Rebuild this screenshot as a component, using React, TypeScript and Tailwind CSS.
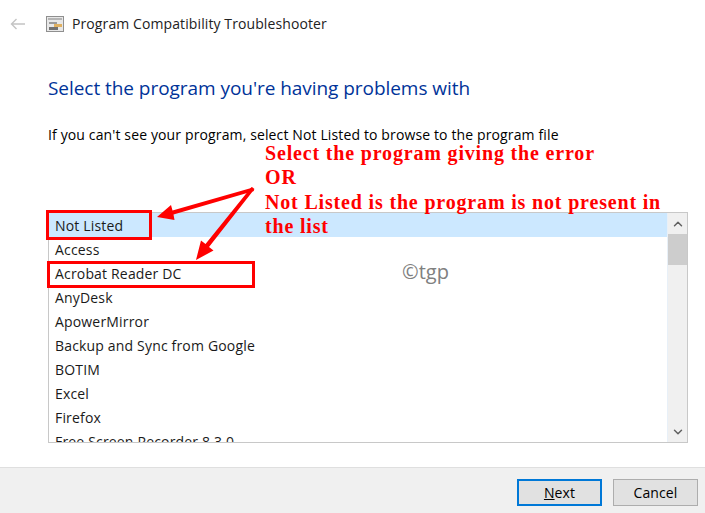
import { ChevronDown, ChevronUp } from 'lucide-react'

const programs = [
  'Not Listed',
  'Access',
  'Acrobat Reader DC',
  'AnyDesk',
  'ApowerMirror',
  'Backup and Sync from Google',
  'BOTIM',
  'Excel',
  'Firefox',
  'Free Screen Recorder 8.3.0',
]

function Annotations() {
  return (
    <>
      <div className="absolute left-[46px] top-[210px] h-[30px] w-[106px] border-[3px] border-[#ff0000]" />
      <div className="absolute left-[47px] top-[261px] h-[27px] w-[208px] border-[3px] border-[#ff0000]" />
      <svg className="absolute left-0 top-0" width="705" height="513" fill="#ff0000">
        <path d="M253 187.5L172.5 210.5L171 205L157 217L174.5 220L173.5 214.5L254 191Z" />
        <path d="M251.5 187L205.5 244L201 240.5L196 260L213.5 250.5L209 247L254.500 189Z" />
      </svg>
      <div className="absolute left-[265px] top-[141px] w-[420px] font-['Liberation_Serif',serif] text-[20px] font-bold leading-[24.3px] tracking-[0.83px] text-[#ff0000]">
        <div>Select the program giving the error</div>
        <div>OR</div>
        <div>Not Listed is the program is not present in</div>
        <div>the list</div>
      </div>
      <div className="absolute left-[402px] top-[258px] font-['Open_Sans',sans-serif] text-[20px] leading-[28px] text-[#808080]">
        ©tgp
      </div>
    </>
  )
}

export default function App() {
  return (
    <div className="relative flex h-[513px] w-[705px] flex-col overflow-hidden bg-white font-['Open_Sans',sans-serif] text-black">
      {/* Title bar */}
      <div className="flex h-[48px] items-center">
        <svg className="ml-[10px]" width="16" height="12" viewBox="0 0 16 12" fill="none" stroke="#c4c4c4" strokeWidth="1.4">
          <path d="M15 6H1.500M6.500 1L1.500 6L6.500 11" />
        </svg>
        <svg className="ml-[20px]" width="18" height="16" viewBox="0 0 18 16">
          <rect x="0.500" y="0.500" width="17" height="15" fill="#e8e8e8" stroke="#8f8f8f" />
          <rect x="2" y="2" width="14" height="2" fill="#b5b5b5" />
          <rect x="3" y="6" width="8" height="2" fill="#9a9a9a" />
          <rect x="8" y="8" width="8" height="3" fill="#e0b060" />
          <rect x="3" y="11" width="9" height="3" fill="#707070" />
        </svg>
        <span className="ml-[8px] text-[14px] leading-none tracking-[0.1px] text-[#222222]">
          Program Compatibility Troubleshooter
        </span>
      </div>

      {/* Body */}
      <div className="flex min-h-0 flex-1 flex-col pl-[48px] pr-[17px]">
        <h1 className="mt-[27px] text-[19px] font-normal leading-[26px] tracking-[-0.05px] text-[#003399]">
          Select the program you're having problems with
        </h1>
        <p className="mt-[25px] text-[14px] leading-[18px] tracking-[0.13px]">
          If you can't see your program, select Not Listed to browse to the program file
        </p>
        <div className="mt-[68px] flex h-[231px] w-[640px] border border-[#c8c8c8]">
          <ul className="min-w-0 flex-1 overflow-hidden">
            {programs.map((name, i) => (
              <li
                key={name}
                className={`h-[24px] pl-[6px] text-[14px] leading-[26px] tracking-[0.17px] text-[#1a1a1a] ${i === 0 ? 'bg-[#cce8ff]' : ''}`}
              >
                {name}
              </li>
            ))}
          </ul>
          <div className="flex w-[20px] flex-col items-center border-l border-[#e8f0f8] bg-[#f0f0f0]">
            <div className="flex h-[21px] items-center justify-center">
              <ChevronUp size={14} strokeWidth={2.5} color="#606060" />
            </div>
            <div className="h-[31px] w-full bg-[#cdcdcd]" />
            <div className="flex-1" />
            <div className="flex h-[21px] items-center justify-center">
              <ChevronDown size={14} strokeWidth={2.5} color="#606060" />
            </div>
          </div>
        </div>
      </div>

      {/* Footer */}
      <div className="flex h-[46px] items-start justify-end gap-[11px] border-t border-[#dfdfdf] bg-[#f0f0f0] pr-[7px] pt-[11px]">
        <button className="h-[27px] w-[85px] border-2 border-[#0078d7] bg-[#e1e1e1] text-[14px] leading-none tracking-[0.1px]">
          <span className="underline">N</span>ext
        </button>
        <button className="h-[27px] w-[85px] border border-[#adadad] bg-[#e1e1e1] text-[14px] leading-none tracking-[0.1px]">
          Cancel
        </button>
      </div>

      <Annotations />
    </div>
  )
}
